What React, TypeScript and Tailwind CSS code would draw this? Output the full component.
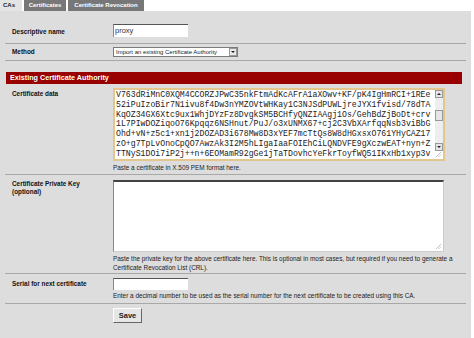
import React from "react";

const certLines = [
  "V763dRiMnC0XQM4CCORZJPwC35nkFtmAdKcAFrA1aXOwv+KF/pK4IgHmRCI+1REe",
  "52iPuIzoBir7N1ivu8f4Dw3nYMZOVtWHKay1C3NJSdPUWLjreJYX1fvisd/78dTA",
  "KqOZ34GX6Xtc9ux1WhjDYzFz8DvgkSM5BCHfyQNZIAAgj1Os/GehBdZjBoDt+crv",
  "1L7PIwDOZiqoO76Kpqqz6NSHnut/PuJ/o3xUNMX67+cj2C3VbXArfqqNsb3viBbG",
  "Ohd+vN+z5c1+xn1j2DOZAD3i678Mw8D3xYEF7mcTtQs8W8dHGxsxO761YHyCAZ17",
  "zO+g7TpLvOnoCpQO7AwzAk3I2M5hLIgaIaaFOIEhCiLQNDVFE9gXczwEAT+nyn+Z",
  "TTNyS1DOi7iP2j++n+6EOMamR92gGe1jTaTDovhcYeFkrToyfWQ51IKxHb1xyp3v",
  "qeRxTBPECGTkvmc+8AO7kJNUZwQnwIoO4IE9GbzrdsXkrlqdEYf+7bPEgD4AhF",
];

const font = { fontFamily: '"Liberation Sans", Arial, sans-serif' };

function Grip() {
  return (
    <svg width="7" height="7" viewBox="0 0 7 7" className="absolute right-[1px] bottom-[1px]">
      <line x1="6" y1="1" x2="1" y2="6" stroke="#b0b0b0" strokeWidth="0.8" />
      <line x1="6" y1="3.5" x2="3.5" y2="6" stroke="#b0b0b0" strokeWidth="0.8" />
    </svg>
  );
}

export default function App() {
  return (
    <div className="w-[474px] h-[338px] bg-white overflow-hidden text-[#111]" style={font}>
      {/* Tabs */}
      <div className="flex h-[11px] items-stretch gap-[2px]">
        <div className="bg-[#e4e4e4] pl-[3px] text-[6px] font-bold leading-[11px] text-[#222] w-[22px]">CAs</div>
        <div className="bg-[#777777] text-[6px] font-bold leading-[11px] text-white w-[42px] text-center">Certificates</div>
        <div className="bg-[#777777] text-[6px] font-bold leading-[11px] text-white w-[76px] text-center">Certificate Revocation</div>
      </div>

      {/* Panel */}
      <div className="w-[471px] h-[327px] bg-[#dddddd] pt-[13px] px-[5px]">
        {/* Descriptive name */}
        <div className="flex h-[20px] border-b border-[#a8a8a8]">
          <div className="w-[108px] pl-[7px] pt-[3px] text-[6.4px] font-bold">Descriptive name</div>
          <div>
            <div className="w-[75px] h-[13px] bg-white border-t border-l border-t-[#555] border-l-[#888] pl-[1px] text-[7.5px] leading-[12px] text-[#333]">proxy</div>
          </div>
        </div>

        {/* Method */}
        <div className="flex h-[17px] border-b border-[#a8a8a8] items-center">
          <div className="w-[108px] pl-[7px] text-[6.4px] font-bold">Method</div>
          <div className="w-[125px] h-[10px] bg-white border border-[#7a7a7a] flex items-center">
            <div className="flex-1 pl-[2px] text-[6px] leading-[8px] text-[#222] whitespace-nowrap overflow-hidden">Import an existing Certificate Authority</div>
            <div className="w-[8px] h-[8px] bg-[#e8e8e8] border border-[#999] flex items-center justify-center">
              <div className="w-0 h-0 border-l-[2px] border-r-[2px] border-t-[2px] border-l-transparent border-r-transparent border-t-[#222]" />
            </div>
          </div>
        </div>

        {/* Red header */}
        <div className="mt-[11px] mr-[4px] ml-[1px] h-[12px] bg-[#990000] text-white text-[7.2px] font-bold leading-[12px] pl-[4px]">
          Existing Certificate Authority
        </div>

        {/* Certificate data */}
        <div className="flex h-[91px] border-b border-[#a8a8a8]">
          <div className="w-[108px] pl-[7px] pt-[5px] text-[6.4px] font-bold">Certificate data</div>
          <div className="pt-[4px]">
            <div className="relative w-[332px] h-[73px] bg-white border-2 border-[#e3c68e] overflow-hidden">
              <div
                className="h-full overflow-hidden pl-[1px] text-[8.2px] leading-[9.8px] whitespace-pre text-[#222]"
                style={{ fontFamily: '"Liberation Mono", "Courier New", monospace' }}
              >
                {certLines.join("\n")}
              </div>
              {/* scrollbar */}
              <div className="absolute right-0 top-0 w-[8px] h-[61px] bg-[#eeeeee] flex flex-col">
                <div className="h-[8px] bg-[#e6e6e6] border border-[#999] flex items-center justify-center">
                  <div className="w-0 h-0 border-l-[2px] border-r-[2px] border-b-[2px] border-l-transparent border-r-transparent border-b-[#222]" />
                </div>
                <div className="h-[12px]" />
                <div className="h-[11px] bg-[#e6e6e6] border border-[#999]" />
                <div className="flex-1" />
                <div className="h-[8px] bg-[#e6e6e6] border border-[#999] flex items-center justify-center">
                  <div className="w-0 h-0 border-l-[2px] border-r-[2px] border-t-[2px] border-l-transparent border-r-transparent border-t-[#222]" />
                </div>
              </div>
              <Grip />
            </div>
            <div className="text-[6.4px] leading-[9px] mt-[2px] text-[#222]">Paste a certificate in X.509 PEM format here.</div>
          </div>
        </div>

        {/* Private key */}
        <div className="flex h-[99px] border-b border-[#a8a8a8]">
          <div className="w-[108px] pl-[7px] pt-[5px] text-[6.4px] font-bold leading-[8px]">
            Certificate Private Key
            <br />
            (optional)
          </div>
          <div className="pt-[5px]">
            <div className="relative w-[331px] h-[72px] bg-white border-t-2 border-l border-t-[#444] border-l-[#888] border-r border-b border-r-[#ccc] border-b-[#ccc]">
              <Grip />
            </div>
            <div className="text-[6.4px] leading-[9px] mt-[2px] text-[#222] whitespace-nowrap">
              Paste the private key for the above certificate here. This is optional in most cases, but required if you need to generate a
              <br />
              Certificate Revocation List (CRL).
            </div>
          </div>
        </div>

        {/* Serial */}
        <div className="flex h-[30px] border-b border-[#a8a8a8]">
          <div className="w-[108px] pl-[7px] pt-[5px] text-[6.4px] font-bold">Serial for next certificate</div>
          <div className="pt-[4px]">
            <div className="w-[75px] h-[12px] bg-white border-t border-l border-t-[#555] border-l-[#888]" />
            <div className="text-[6.4px] leading-[9px] mt-[1px] text-[#222] whitespace-nowrap">
              Enter a decimal number to be used as the serial number for the next certificate to be created using this CA.
            </div>
          </div>
        </div>

        {/* Save */}
        <div className="flex pt-[4px]">
          <div className="w-[108px]" />
          <div className="w-[29px] h-[15px] bg-[#e6e6e6] border border-t-[#fff] border-l-[#fff] border-r-[#666] border-b-[#666] text-[7.5px] font-bold leading-[13px] text-center text-[#222]">
            Save
          </div>
        </div>
      </div>
    </div>
  );
}
